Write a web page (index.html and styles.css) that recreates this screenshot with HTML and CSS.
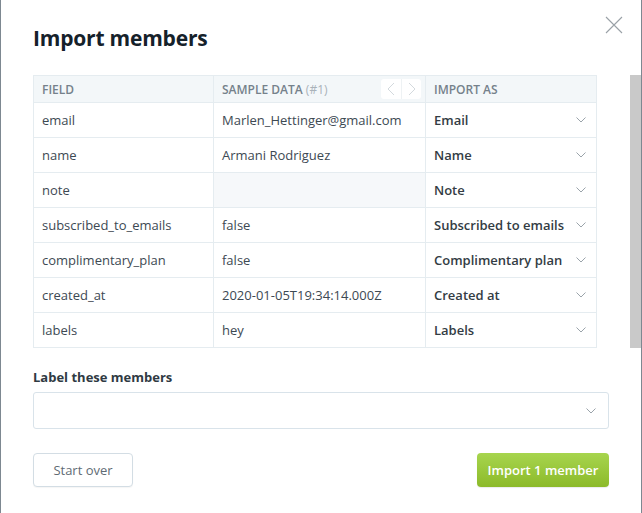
FILE: index.html
```html
<!DOCTYPE html>
<html>
<head>
<meta charset="utf-8">
<link rel="stylesheet" href="styles.css">
</head>
<body>
<div class="modal">
  <button class="close" aria-label="Close">
    <svg width="18" height="18" viewBox="0 0 18 18"><path d="M1 1L17 17M17 1L1 17" stroke="#9aa1a7" stroke-width="1.1" fill="none"/></svg>
  </button>
  <h1 class="title">Import members</h1>
  <div class="scroll">
    <div class="scroll-content">
      <table class="map">
        <thead>
          <tr>
            <th class="c-field">Field</th>
            <th class="c-sample"><div class="sample-head"><span>Sample data <span class="muted">(#1)</span></span>
              <span class="pager">
                <span class="pg"><svg width="8" height="14" viewBox="0 0 8 14"><path d="M7 1L1 7L7 13" stroke="#d3d9dd" stroke-width="1" fill="none"/></svg></span>
                <span class="pg"><svg width="8" height="14" viewBox="0 0 8 14"><path d="M1 1L7 7L1 13" stroke="#d3d9dd" stroke-width="1" fill="none"/></svg></span>
              </span></div></th>
            <th class="c-import">Import as</th>
          </tr>
        </thead>
        <tbody>
          <tr><td>email</td><td>Marlen_Hettinger@gmail.com</td><td class="imp"><div class="sel"><span>Email</span><svg class="chev" width="10" height="6" viewBox="0 0 10 6"><path d="M0.5 0.5L5 5L9.5 0.5" stroke="#9aa3aa" fill="none"/></svg></div></td></tr>
          <tr><td>name</td><td>Armani Rodriguez</td><td class="imp"><div class="sel"><span>Name</span><svg class="chev" width="10" height="6" viewBox="0 0 10 6"><path d="M0.5 0.5L5 5L9.5 0.5" stroke="#9aa3aa" fill="none"/></svg></div></td></tr>
          <tr><td>note</td><td class="empty"></td><td class="imp"><div class="sel"><span>Note</span><svg class="chev" width="10" height="6" viewBox="0 0 10 6"><path d="M0.5 0.5L5 5L9.5 0.5" stroke="#9aa3aa" fill="none"/></svg></div></td></tr>
          <tr><td>subscribed_to_emails</td><td>false</td><td class="imp"><div class="sel"><span>Subscribed to emails</span><svg class="chev" width="10" height="6" viewBox="0 0 10 6"><path d="M0.5 0.5L5 5L9.5 0.5" stroke="#9aa3aa" fill="none"/></svg></div></td></tr>
          <tr><td>complimentary_plan</td><td>false</td><td class="imp"><div class="sel"><span>Complimentary plan</span><svg class="chev" width="10" height="6" viewBox="0 0 10 6"><path d="M0.5 0.5L5 5L9.5 0.5" stroke="#9aa3aa" fill="none"/></svg></div></td></tr>
          <tr><td>created_at</td><td>2020-01-05T19:34:14.000Z</td><td class="imp"><div class="sel"><span>Created at</span><svg class="chev" width="10" height="6" viewBox="0 0 10 6"><path d="M0.5 0.5L5 5L9.5 0.5" stroke="#9aa3aa" fill="none"/></svg></div></td></tr>
          <tr><td>labels</td><td>hey</td><td class="imp"><div class="sel"><span>Labels</span><svg class="chev" width="10" height="6" viewBox="0 0 10 6"><path d="M0.5 0.5L5 5L9.5 0.5" stroke="#9aa3aa" fill="none"/></svg></div></td></tr>
        </tbody>
      </table>
    </div>
    <div class="scrollbar"><div class="thumb"></div></div>
  </div>
  <div class="label-group">
    <label class="label">Label these members</label>
    <div class="input"><svg class="chev" width="10" height="6" viewBox="0 0 10 6"><path d="M0.5 0.5L5 5L9.5 0.5" stroke="#9aa3aa" fill="none"/></svg></div>
  </div>
  <div class="actions">
    <button class="btn btn-ghost">Start over</button>
    <button class="btn btn-green">Import 1 member</button>
  </div>
</div>
</body>
</html>
```

FILE: styles.css
```css
* { box-sizing: border-box; }
html, body { margin: 0; padding: 0; }
body {
  background: #7d8891;
  font-family: "Open Sans", "Noto Sans", sans-serif;
  width: 642px;
  height: 513px;
  overflow: hidden;
  padding: 0 1px;
}
.modal {
  position: relative;
  background: #fff;
  height: 513px;
  padding: 22px 0 0 32px;
}
.close {
  position: absolute;
  top: 16px;
  right: 18px;
  background: none;
  border: 0;
  padding: 0;
  width: 18px;
  height: 18px;
  display: block;
}
.title {
  margin: 0;
  font-size: 21px;
  line-height: 32px;
  font-weight: 700;
  color: #15212a;
  letter-spacing: -0.2px;
}
.scroll {
  margin-top: 21px;
  display: flex;
  height: 273px;
}
.scroll-content {
  width: 564px;
}
.scrollbar {
  margin-left: auto;
  width: 11px;
  height: 273px;
}
.thumb {
  background: #c9c9c9;
  height: 100%;
}
.map {
  border-collapse: collapse;
  width: 564px;
  font-size: 13px;
  color: #3d4953;
  table-layout: fixed;
}
.map th, .map td {
  border: 1px solid #e5ecf0;
  text-align: left;
  padding: 0 8px;
  white-space: nowrap;
}
.map th {
  background: #f3f7f9;
  height: 27px;
  font-size: 12px;
  font-weight: 600;
  text-transform: uppercase;
  color: #75818b;
}
.map td { height: 35px; }
.c-field { width: 180px; }
.c-sample { width: 212px; }
.muted { color: #a9b2b9; font-weight: 400; }
.sample-head {
  display: flex;
  align-items: center;
  justify-content: space-between;
}
.pager {
  display: flex;
  background: #fff;
  border-radius: 3px;
  height: 20px;
  margin-right: -4px;
}
.pg {
  width: 20px;
  display: flex;
  align-items: center;
  justify-content: center;
}
.pg + .pg { border-left: 1px solid #eef2f4; }
.empty { background: #f6f8fa; }
.imp { font-weight: 600; color: #333c44; }
.sel {
  display: flex;
  align-items: center;
  justify-content: space-between;
}
.sel .chev { margin-right: 2px; flex: none; }
.label-group { padding-right: 32px; margin-top: 20px; }
.label {
  display: block;
  font-size: 13px;
  font-weight: 700;
  color: #2f3a43;
  line-height: 18px;
  margin-bottom: 6px;
}
.input {
  height: 37px;
  border: 1px solid #d9e3ea;
  border-radius: 3px;
  display: flex;
  align-items: center;
  justify-content: flex-end;
  padding-right: 12px;
}
.actions {
  display: flex;
  justify-content: space-between;
  padding-right: 32px;
  margin-top: 24px;
}
.btn {
  height: 34px;
  border-radius: 4px;
  font-family: inherit;
  font-size: 13px;
  padding: 0 19px;
  white-space: nowrap;
}
.btn-ghost {
  background: #fff;
  border: 1px solid #d3dde4;
  color: #5f6b74;
  width: 100px;
  box-shadow: 0 1px 1px rgba(0,0,0,0.04);
}
.btn-green {
  border: 0;
  color: #fff;
  font-weight: 600;
  padding: 0 10px;
  width: 132px;
  background: linear-gradient(#a7d54e, #8cba2a);
  box-shadow: 0 1px 1px rgba(0,0,0,0.08);
}
```
